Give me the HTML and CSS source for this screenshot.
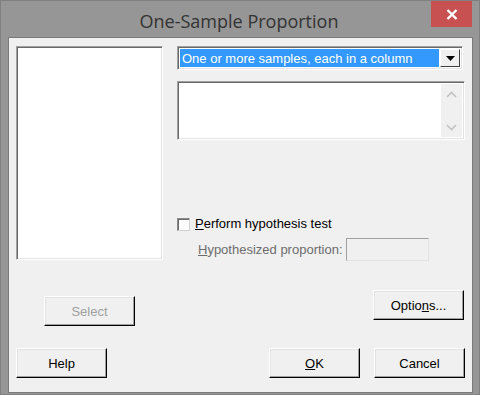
FILE: index.html
```html
<!DOCTYPE html>
<html>
<head>
<meta charset="utf-8">
<link rel="stylesheet" href="styles.css">
</head>
<body>
<div class="window">
  <div class="titlebar">
    <span class="title">One-Sample Proportion</span>
    <div class="close">
      <svg width="12" height="11" viewBox="0 0 12 11"><path d="M1.5 1 L10.5 10 M10.5 1 L1.5 10" stroke="#fff" stroke-width="2.4" fill="none"/></svg>
    </div>
  </div>
  <div class="client">
    <div class="main">
      <div class="left">
        <div class="listbox sunken"></div>
        <button class="btn btn-select" disabled>Select</button>
      </div>
      <div class="right">
        <div class="combo sunken">
          <div class="combo-value">One or more samples, each in a column</div>
          <div class="combo-btn">
            <svg width="9" height="5" viewBox="0 0 9 5"><path d="M0 0 H9 L4.5 5 Z" fill="#000"/></svg>
          </div>
        </div>
        <div class="memo sunken">
          <div class="memo-text"></div>
          <div class="scroll">
            <svg width="11" height="7" viewBox="0 0 11 7"><path d="M1 6 L5.5 1.5 L10 6" stroke="#c2c2c2" stroke-width="1.6" fill="none"/></svg>
            <svg width="11" height="7" viewBox="0 0 11 7"><path d="M1 1 L5.5 5.5 L10 1" stroke="#c2c2c2" stroke-width="1.6" fill="none"/></svg>
          </div>
        </div>
        <div class="check-row">
          <span class="checkbox"></span>
          <span class="label"><u>P</u>erform hypothesis test</span>
        </div>
        <div class="hypo-row">
          <span class="label disabled"><u>H</u>ypothesized proportion:</span>
          <span class="field sunken-light"></span>
        </div>
        <div class="options-row">
          <button class="btn">Optio<u>n</u>s...</button>
        </div>
      </div>
    </div>
    <div class="bottom">
      <button class="btn">Help</button>
      <div class="bottom-right">
        <button class="btn"><u>O</u>K</button>
        <button class="btn">Cancel</button>
      </div>
    </div>
  </div>
</div>
</body>
</html>
```
FILE: styles.css
```css
* { box-sizing: border-box; }
html, body { margin: 0; padding: 0; }
body { width: 480px; height: 395px; overflow: hidden; background: #959595; }

.window {
  width: 480px;
  height: 395px;
  background: #969696;
  border: 1px solid #808080;
  display: flex;
  flex-direction: column;
  position: relative;
}

.titlebar {
  height: 36px;
  display: flex;
  align-items: center;
  justify-content: center;
}
.title {
  font-family: "Open Sans", "Noto Sans", sans-serif;
  font-size: 18px;
  color: #333333;
  margin-top: 3px;
  margin-left: -2px;
}
.close {
  position: absolute;
  top: 0;
  left: 430px;
  width: 41px;
  height: 26px;
  background: #c75050;
  display: flex;
  align-items: center;
  justify-content: center;
}

.client {
  margin: 0 6px 0 7px;
  height: 356px;
  border: 1px solid #7a7a7a;
  background: #f0f0f0;
  padding: 8px 7px 0 7px;
  font-family: "Liberation Sans", Arial, sans-serif;
  font-size: 13px;
  color: #000;
}

.main { display: flex; gap: 14px; }
.left { width: 147px; display: flex; flex-direction: column; }
.right { width: 288px; display: flex; flex-direction: column; }

.sunken {
  border-top: 1px solid #a0a0a0;
  border-left: 1px solid #a0a0a0;
  border-right: 1px solid #ffffff;
  border-bottom: 1px solid #ffffff;
  box-shadow: inset 1px 1px 0 #696969, inset -1px -1px 0 #e3e3e3;
  background: #fff;
}
.sunken-light {
  border-top: 1px solid #a0a0a0;
  border-left: 1px solid #a0a0a0;
  border-right: 1px solid #e3e3e3;
  border-bottom: 1px solid #e3e3e3;
  background: #f0f0f0;
}

.listbox { height: 214px; }

.btn {
  width: 91px;
  height: 30px;
  background: #f0f0f0;
  border-top: 1px solid #ffffff;
  border-left: 1px solid #ffffff;
  border-right: 1px solid #000000;
  border-bottom: 1px solid #000000;
  box-shadow: inset -1px -1px 0 #a0a0a0, inset 1px 1px 0 #e3e3e3;
  font-family: "Liberation Sans", Arial, sans-serif;
  font-size: 13px;
  color: #000;
  padding: 0;
  margin: 0;
}
.btn:disabled { color: #a0a0a0; }
.btn u { text-underline-offset: 1px; }
.btn-select { margin-top: 36px; margin-left: 28px; }

.combo {
  width: 286px;
  height: 24px;
  display: flex;
  padding: 2px;
  gap: 1px;
  background: #fff;
}
.combo-value {
  flex: 1;
  background: #3399ff;
  color: #fff;
  line-height: 19px;
  padding-left: 2px;
  white-space: nowrap;
}
.combo-btn {
  width: 20px;
  background: #f0f0f0;
  border-top: 1px solid #ffffff;
  border-left: 1px solid #ffffff;
  border-right: 1px solid #404040;
  border-bottom: 1px solid #404040;
  display: flex;
  align-items: center;
  justify-content: center;
}

.memo {
  margin-top: 11px;
  height: 59px;
  display: flex;
  padding: 2px;
}
.memo-text { flex: 1; }
.scroll {
  width: 21px;
  background: #f0f0f0;
  display: flex;
  flex-direction: column;
  justify-content: space-between;
  align-items: center;
  padding: 7px 0 6px;
}

.check-row {
  margin-top: 77px;
  display: flex;
  align-items: center;
  gap: 5px;
  height: 14px;
}
.checkbox {
  width: 13px;
  height: 13px;
  background: #fff;
  border: 1px solid #8a8a8a;
  border-right-color: #d0d0d0;
  border-bottom-color: #d0d0d0;
  box-shadow: inset 1px 1px 0 #6a6a6a;
}
.label { white-space: nowrap; line-height: 14px; }
.label u { text-underline-offset: 1px; }
.label.disabled { color: #6d6d6d; }

.hypo-row {
  margin-top: 7px;
  padding-left: 21px;
  display: flex;
  align-items: center;
  gap: 3px;
  height: 23px;
}
.field { width: 83px; height: 23px; }

.options-row {
  margin-top: 29px;
  display: flex;
  justify-content: flex-end;
  padding-right: 1px;
}

.bottom {
  margin-top: 22px;
  display: flex;
  justify-content: space-between;
}
.bottom-right { display: flex; gap: 14px; }
```
